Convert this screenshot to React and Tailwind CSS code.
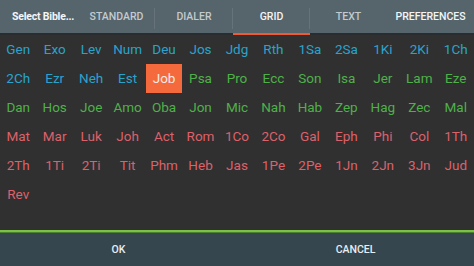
import { useState } from 'react'

const BOOKS = [
  'Gen', 'Exo', 'Lev', 'Num', 'Deu', 'Jos', 'Jdg', 'Rth', '1Sa', '2Sa', '1Ki', '2Ki', '1Ch',
  '2Ch', 'Ezr', 'Neh', 'Est', 'Job', 'Psa', 'Pro', 'Ecc', 'Son', 'Isa', 'Jer', 'Lam', 'Eze',
  'Dan', 'Hos', 'Joe', 'Amo', 'Oba', 'Jon', 'Mic', 'Nah', 'Hab', 'Zep', 'Hag', 'Zec', 'Mal',
  'Mat', 'Mar', 'Luk', 'Joh', 'Act', 'Rom', '1Co', '2Co', 'Gal', 'Eph', 'Phi', 'Col', '1Th',
  '2Th', '1Ti', '2Ti', 'Tit', 'Phm', 'Heb', 'Jas', '1Pe', '2Pe', '1Jn', '2Jn', '3Jn', 'Jud',
  'Rev',
]

// history books blue, wisdom + prophets green, new testament red
function bookColor(i) {
  if (i < 17) return 'text-[#2aa3cc]'
  if (i < 39) return 'text-[#4fb04a]'
  return 'text-[#dc616b]'
}

function Tab({ label, width, active, dim, sep }) {
  return (
    <div className={`relative h-full flex items-center justify-center shrink-0 ${width}`}>
      <span
        className={`text-[10.5px] font-medium whitespace-nowrap ${
          dim ? 'text-[#c3cbcf]' : 'text-[#f2f5f6]'
        }`}
      >
        {label}
      </span>
      {sep && <div className="absolute right-0 top-[8px] bottom-[4px] w-px bg-[#66737a]" />}
      {active && <div className="absolute left-0 right-0 -bottom-[2px] h-[2px] bg-[#f05a35]" />}
    </div>
  )
}

export default function App() {
  const [selected, setSelected] = useState('Job')

  return (
    <div
      className="w-[474px] h-[266px] flex flex-col bg-[#303030] overflow-hidden"
      style={{ fontFamily: 'Roboto, "Liberation Sans", sans-serif' }}
    >
      {/* Tab strip */}
      <div className="h-[33px] flex bg-[#56646c] shrink-0">
        <div className="w-[78px] h-full flex items-center pl-[12px] shrink-0">
          <span className="text-[10.5px] font-bold text-[#f4f6f7] whitespace-nowrap tracking-[-0.2px]">Select Bible...</span>
        </div>
        <Tab label="STANDARD" width="w-[77px]" dim sep />
        <Tab label="DIALER" width="w-[78px]" dim sep />
        <Tab label="GRID" width="w-[77px]" active sep />
        <Tab label="TEXT" width="w-[77px]" dim />
        <Tab label="PREFERENCES" width="flex-1" />
      </div>
      <div className="h-[2px] bg-[#2a2d2f] shrink-0" />

      {/* Book grid */}
      <div className="flex-1 grid grid-cols-[repeat(13,minmax(0,1fr))] auto-rows-[29px] content-start">
        {BOOKS.map((b, i) => (
          <button
            key={b}
            onClick={() => setSelected(b)}
            className={`flex items-center justify-center text-[13.5px] ${
              selected === b ? 'bg-[#f46a3c] text-[#fbe9e3]' : bookColor(i)
            }`}
          >
            {b}
          </button>
        ))}
      </div>

      {/* Bottom buttons */}
      <div className="h-[2px] bg-[#7cc146] shrink-0" />
      <div className="h-[1px] bg-[#4c7f33] shrink-0" />
      <div className="h-[33px] flex bg-[#36464f] shrink-0">
        <button className="flex-1 flex items-center justify-center text-[10.5px] font-medium text-[#e8edef]">OK</button>
        <button className="flex-1 flex items-center justify-center text-[10.5px] font-medium text-[#e8edef]">CANCEL</button>
      </div>
    </div>
  )
}
